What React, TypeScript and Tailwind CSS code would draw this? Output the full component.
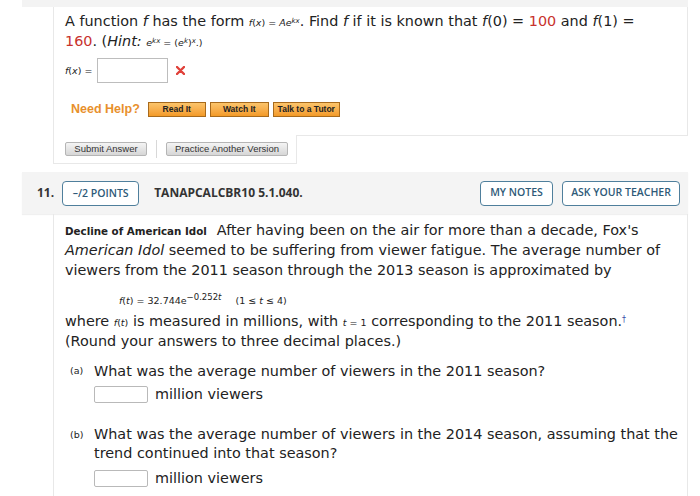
import React from 'react';

const mathFont = { fontFamily: '"DejaVu Sans", Verdana, sans-serif' };

const Small: React.FC<{ children: React.ReactNode }> = ({ children }) => (
    <span className="text-[9.5px] leading-none" style={mathFont}>{children}</span>
);

const HelpButton: React.FC<{ label: string; w: string }> = ({ label, w }) => (
    <button className={`${w} h-[15px] border border-[#a86a1c] bg-gradient-to-b from-[#fbc46a] to-[#f39a26] text-[8.5px] font-bold text-[#222] leading-[13px] [font-family:'Liberation_Sans',Arial,sans-serif]`}>
        {label}
    </button>
);

const GrayButton: React.FC<{ label: string; w: string }> = ({ label, w }) => (
    <button className={`${w} h-[14px] rounded-[2px] border border-[#b5b5b5] bg-gradient-to-b from-[#f4f4f4] to-[#d6d6d6] text-[9.5px] text-[#333] leading-[12px] [font-family:'Liberation_Sans',Arial,sans-serif]`}>
        {label}
    </button>
);

const OutlineButton: React.FC<{ label: string; w: string }> = ({ label, w }) => (
    <button className={`${w} h-[25px] rounded-[4px] border border-[#4f7f9c] bg-white text-[10.5px] font-semibold text-[#2e5a78] [font-family:'Open_Sans',sans-serif]`}>
        {label}
    </button>
);

const AnswerBox: React.FC = () => (
    <span className="inline-block w-[54px] h-[17px] border border-[#b9b9b9] rounded-[2px] bg-white align-middle" />
);

export default function App() {
    return (
        <div className="w-[700px] h-[496px] overflow-hidden bg-white text-[#222] [font-family:'DejaVu_Sans',Verdana,sans-serif]">
            {/* previous question header remnant */}
            <div className="ml-[22px] w-[666px] h-[7px] bg-[#f3f3f3]" />

            {/* question 10 body */}
            <div className="ml-[53px] w-[635px]">
                <div className="border-l border-r border-[#e8e8e8] pl-[11px] pt-[4px] pb-[16px]">
                    <p className="text-[14.4px] leading-[20px]">
                        A function <i>f</i> has the form <Small><i>f</i>(<i>x</i>) = <i>Ae</i><sup className="text-[7px]"><i>kx</i></sup></Small>. Find <i>f</i> if it is known that <i>f</i>(0) = <span className="text-[#c8322d]">100</span> and <i>f</i>(1) =
                        <br />
                        <span className="text-[#c8322d]">160</span>. (<i>Hint:</i> <Small><i>e</i><sup className="text-[7px]"><i>kx</i></sup> = (<i>e</i><sup className="text-[7px]"><i>k</i></sup>)<sup className="text-[7px]"><i>x</i></sup>.)</Small>
                    </p>
                    <div className="mt-[7px] flex items-center h-[25px]">
                        <Small><i>f</i>(<i>x</i>) =</Small>
                        <span className="ml-[5px] w-[71px] h-[25px] border border-[#bdbdbd] bg-white" />
                        <svg className="ml-[8px]" width="9" height="9" viewBox="0 0 9 9">
                            <path d="M1 1 L8 8 M8 1 L1 8" stroke="#e0413a" strokeWidth="2.4" strokeLinecap="round" />
                        </svg>
                    </div>
                    <div className="mt-[16px] flex items-center h-[20px] pl-[6px]">
                        <span className="text-[12.5px] font-bold text-[#e8902c] [font-family:'Liberation_Sans',Arial,sans-serif] mr-[8px]">Need Help?</span>
                        <div className="flex gap-[4px]">
                            <HelpButton label="Read It" w="w-[58px]" />
                            <HelpButton label="Watch It" w="w-[59px]" />
                            <HelpButton label="Talk to a Tutor" w="w-[67px]" />
                        </div>
                    </div>
                </div>
                <div className="flex">
                    <div className="w-[244px] h-[29px] border-l border-r border-b border-[#e8e8e8] flex items-center pl-[11px]">
                        <GrayButton label="Submit Answer" w="w-[82px]" />
                        <span className="mx-[9px] w-px h-[18px] bg-[#d8d8d8]" />
                        <GrayButton label="Practice Another Version" w="w-[122px]" />
                    </div>
                    <div className="flex-1 border-t border-[#e8e8e8]" />
                </div>
            </div>

            {/* question 11 header */}
            <div className="mt-[8px] ml-[22px] w-[666px] h-[42px] bg-[#f4f4f4] flex items-center pl-[15px] pr-[8px] shadow-[0_1px_1px_rgba(0,0,0,0.06)]">
                <span className="text-[12px] font-bold text-[#333] [font-family:'Open_Sans',sans-serif]">11.</span>
                <span className="ml-[8px]"><OutlineButton label="–/2 POINTS" w="w-[77px]" /></span>
                <span className="ml-[15px] text-[12px] font-bold text-[#333] [font-family:'Open_Sans',sans-serif]">TANAPCALCBR10 5.1.040.</span>
                <div className="ml-auto flex gap-[9px]">
                    <OutlineButton label="MY NOTES" w="w-[73px]" />
                    <OutlineButton label="ASK YOUR TEACHER" w="w-[118px]" />
                </div>
            </div>

            {/* question 11 body */}
            <div className="ml-[53px] w-[635px] border-l border-r border-[#e8e8e8] pl-[11px] pt-[6px] pb-[20px]">
                <p className="text-[14.4px] leading-[20px]">
                    <span className="text-[10.3px] leading-none font-bold mr-[10px]">Decline of American Idol</span>After having been on the air for more than a decade, Fox's <i>American Idol</i> seemed to be suffering from viewer fatigue. The average number of viewers from the 2011 season through the 2013 season is approximated by
                </p>
                <p className="mt-[11px] pl-[54px] h-[20px] leading-[20px] text-[9.5px]" style={mathFont}>
                    <i>f</i>(<i>t</i>) = 32.744e<sup className="text-[8.5px]">−0.252<i>t</i></sup>
                    <span className="ml-[14px]">(1 ≤ <i>t</i> ≤ 4)</span>
                </p>
                <p className="text-[14.4px] leading-[20px]">
                    where <Small><i>f</i>(<i>t</i>)</Small> is measured in millions, with <Small><i>t</i> = 1</Small> corresponding to the 2011 season.<sup className="text-[8px] text-[#3b4ea8]">†</sup>
                    <br />
                    (Round your answers to three decimal places.)
                </p>

                <div className="mt-[10px] flex text-[14.4px] leading-[20px]">
                    <span className="w-[29px] shrink-0 pl-[5px] text-[9.5px]">(a)</span>
                    <div>
                        <p>What was the average number of viewers in the 2011 season?</p>
                        <div className="mt-[4px] flex items-center h-[18px]">
                            <AnswerBox />
                            <span className="ml-[7px]">million viewers</span>
                        </div>
                    </div>
                </div>

                <div className="mt-[22px] flex text-[14.4px] leading-[19px]">
                    <span className="w-[29px] shrink-0 pl-[5px] text-[9.5px]">(b)</span>
                    <div>
                        <p>What was the average number of viewers in the 2014 season, assuming that the trend continued into that season?</p>
                        <div className="mt-[6px] flex items-center h-[18px]">
                            <AnswerBox />
                            <span className="ml-[7px]">million viewers</span>
                        </div>
                    </div>
                </div>
            </div>
        </div>
    );
}
